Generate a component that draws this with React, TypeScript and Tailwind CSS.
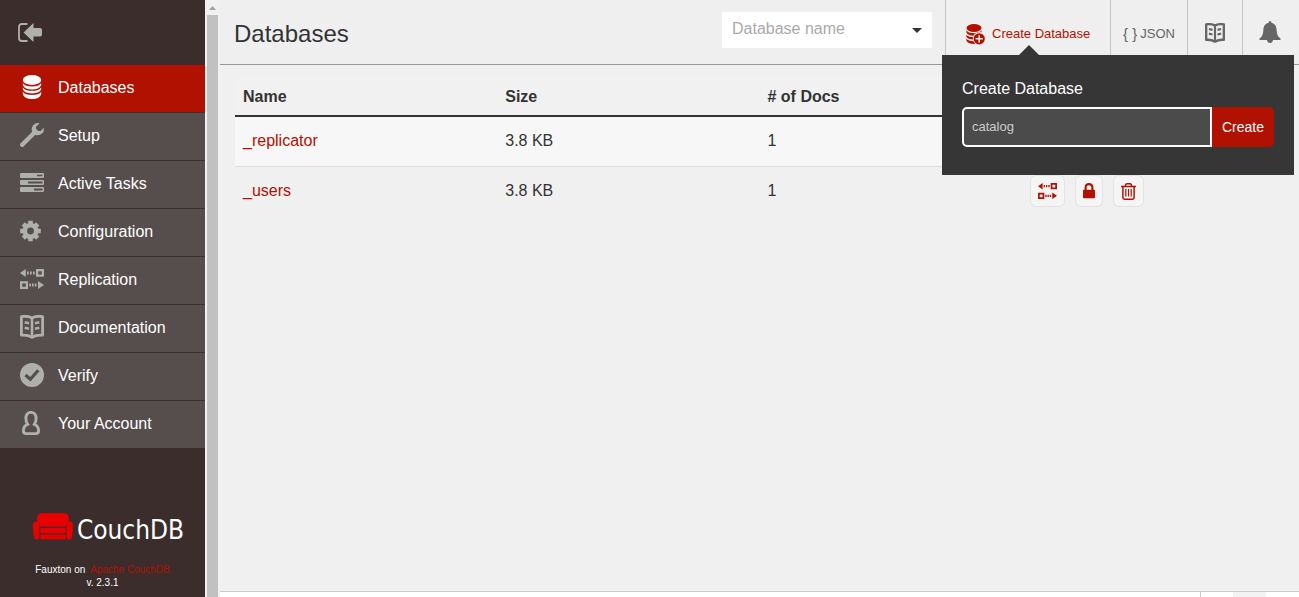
import React from 'react';

type IconProps = { className?: string };

function CollapseIcon({ className }: IconProps) {
  return (
    <svg className={className} viewBox="0 0 24 20" width="24" height="20" aria-hidden="true">
      <path d="M9.5 1H4Q1 1 1 4V15Q1 18 4 18H9.5" fill="none" stroke="currentColor" strokeWidth="1.8" />
      <path d="M5.5 9.5 15.5 0V5H22Q24 5 24 6.8V11.7Q24 13.5 22 13.5H15.5V19Z" fill="currentColor" />
    </svg>
  );
}

function DatabaseIcon({ className }: IconProps) {
  return (
    <svg className={className} viewBox="0 0 24 24" width="24" height="24" fill="currentColor" aria-hidden="true">
      <ellipse cx="12" cy="5" rx="9.2" ry="5" />
      <path d="M2.8 8Q5 11.6 12 11.6T21.2 8V9.7Q20 14.4 12 14.4T2.8 9.7Z" />
      <path d="M2.8 12.4Q5 15.8 12 15.8T21.2 12.4V14Q20 18.4 12 18.4T2.8 14Z" />
      <path d="M2.8 16.8Q5 20 12 20T21.2 16.8V19Q20 24 12 24T2.8 19Z" />
    </svg>
  );
}

function DatabaseAddIcon({ className }: IconProps) {
  return (
    <svg className={className} viewBox="0 0 19 21" width="19" height="21" fill="currentColor" aria-hidden="true">
      <ellipse cx="8" cy="4" rx="7.5" ry="4" />
      <path d="M0.4 6.3Q2 9.2 8 9.2T15.5 6.3V8.2H11L8 11.8Q1.5 11.4 0.4 8.3Z" />
      <path d="M0.4 10.4Q2 13 7.6 13.2V15.6Q1.5 15.2 0.4 12.4Z" />
      <path d="M0.4 14.4Q2 17 8 17.2L10 20Q1.5 20.4 0.4 16.6Z" />
      <circle cx="13.2" cy="14.8" r="6.3" fill="#f0f0f0" />
      <circle cx="13.2" cy="14.8" r="5.6" />
      <path d="M13.2 11.2V18.4M9.6 14.8H16.8" stroke="#f0f0f0" strokeWidth="1.5" />
    </svg>
  );
}

function WrenchIcon({ className }: IconProps) {
  return (
    <svg className={className} viewBox="0 0 24 24" width="24" height="24" aria-hidden="true">
      <path d="M2.2 21.8 15.3 8.7" stroke="currentColor" strokeWidth="4.4" strokeLinecap="round" />
      <path
        d="M19.6 0.4Q16 -0.6 13.4 2Q11 4.6 12 8.4L15.6 12Q19.4 13 22 10.6Q24.5 8 23.8 4.8L20.5 7.9Q18.5 8.6 17 7.1T16.2 3.6Z"
        fill="currentColor"
      />
    </svg>
  );
}

function TasksIcon({ className }: IconProps) {
  return (
    <svg className={className} viewBox="0 0 24 24" width="24" height="24" fill="currentColor" aria-hidden="true">
      <path
        fillRule="evenodd"
        d="M1 2H23Q24 2 24 3V6Q24 7 23 7H1Q0 7 0 6V3Q0 2 1 2ZM17 3.7V5.3H22.5V3.7ZM1 9H23Q24 9 24 10V13Q24 14 23 14H1Q0 14 0 13V10Q0 9 1 9ZM8 10.5V12.5H22.5V10.5ZM1 16H23Q24 16 24 17V20Q24 21 23 21H1Q0 21 0 20V17Q0 16 1 16ZM14 17.5V19.5H22.5V17.5Z"
      />
    </svg>
  );
}

function GearIcon({ className }: IconProps) {
  return (
    <svg className={className} viewBox="0 0 24 24" width="24" height="24" aria-hidden="true">
      <g fill="none" stroke="currentColor" strokeWidth="4.6">
        <path d="M10.5 1.7V7M10.5 17V22.3M0.2 12H5.5M15.5 12H20.8M3.3 4.8 7 8.5M14 15.5 17.7 19.2M3.3 19.2 7 15.5M14 8.5 17.7 4.8" />
        <circle cx="10.5" cy="12" r="5.7" strokeWidth="4.6" />
      </g>
    </svg>
  );
}

function ReplicateIcon({ className }: IconProps) {
  return (
    <svg className={className} viewBox="0 0 24 20" width="24" height="20" fill="currentColor" aria-hidden="true">
      <path d="M0 4 5.8 0V8ZM7 2.4H8.7V5.4H7ZM10 2.4H11.7V5.4H10ZM13 2.4H14.7V5.4H13Z" />
      <path fillRule="evenodd" d="M16 0H24V7.8H16ZM18.2 2.2V5.6H21.8V2.2ZM0 12.2H8V20H0ZM2.2 14.4V17.8H5.8V14.4Z" />
      <path d="M9.2 14.6H10.9V17.6H9.2ZM12 14.6H13.7V17.6H12ZM14.8 14.6H16.5V17.6H14.8ZM18 12 24 16.1 18 20Z" />
    </svg>
  );
}

function BookIcon({ className }: IconProps) {
  return (
    <svg className={className} viewBox="0 0 24 24" fill="none" stroke="currentColor" aria-hidden="true">
      <path d="M1.4 1.6Q8 0.7 12 3Q16 0.7 22.6 1.6V20.2Q16 19.8 12 22.4Q8 19.8 1.4 20.2Z" strokeWidth="2.8" strokeLinejoin="round" />
      <path d="M12 2.5V22" strokeWidth="2.6" />
      <path d="M4.7 7.2 9 8.2M4.7 12.8 9 13.8M15 8.2 19.3 7.2M15 13.8 19.3 12.8" strokeWidth="2.6" />
    </svg>
  );
}

function CheckIcon({ className }: IconProps) {
  return (
    <svg className={className} viewBox="0 0 24 24" width="24" height="24" aria-hidden="true">
      <circle cx="12" cy="12" r="12" fill="currentColor" />
      <path d="M5.5 12 10.3 16.3 18.3 7.3" fill="none" stroke="#564e4c" strokeWidth="3.2" />
    </svg>
  );
}

function UserIcon({ className }: IconProps) {
  return (
    <svg className={className} viewBox="0 0 24 24" width="24" height="24" aria-hidden="true">
      <path
        d="M11 1.4C7.4 1.4 5.9 3.8 5.9 7.4C5.9 9.8 6.4 11.8 7.6 13.4C4.6 14.6 3.4 16.8 3.4 19.8Q3.4 22.6 6.2 22.6H15.8Q18.6 22.6 18.6 19.8C18.6 16.8 17.4 14.6 14.4 13.4C15.6 11.8 16.1 9.8 16.1 7.4C16.1 3.8 14.6 1.4 11 1.4Z"
        fill="none"
        stroke="currentColor"
        strokeWidth="2.9"
      />
    </svg>
  );
}

function BellIcon({ className }: IconProps) {
  return (
    <svg className={className} viewBox="0 0 22 22" width="22" height="22" fill="currentColor" aria-hidden="true">
      <path d="M11 0Q12.4 0 12.5 1.7C16 2.6 17.4 5.3 17.6 8.5C17.8 13 18.6 15.8 21.5 17.6V19H14Q13.6 22 11 22T8 19H0.5V17.6C3.4 15.8 4.2 13 4.4 8.5C4.6 5.3 6 2.6 9.5 1.7Q9.6 0 11 0Z" />
    </svg>
  );
}

function LockIcon({ className }: IconProps) {
  return (
    <svg className={className} viewBox="0 0 12 16" width="12" height="16" aria-hidden="true">
      <path d="M2.6 8V4.8Q2.6 1.1 6 1.1T9.4 4.8V8" fill="none" stroke="currentColor" strokeWidth="2.1" />
      <rect y="6.8" width="12" height="8.4" rx="0.8" fill="currentColor" />
    </svg>
  );
}

function TrashIcon({ className }: IconProps) {
  return (
    <svg className={className} viewBox="0 0 15 17" width="15" height="17" fill="none" stroke="currentColor" aria-hidden="true">
      <path d="M0 3.5H15" strokeWidth="1.5" />
      <path d="M4.3 3.2Q4.5 0.8 6 0.8H9Q10.5 0.8 10.7 3.2" strokeWidth="1.4" />
      <path d="M1.9 3.5V14.6Q1.9 16.2 3.5 16.2H11.5Q13.1 16.2 13.1 14.6V3.5" strokeWidth="1.5" />
      <path d="M4.8 6V13.6M7.5 6V13.6M10.2 6V13.6" strokeWidth="1.2" />
    </svg>
  );
}

function CouchLogo() {
  return (
    <svg viewBox="0 0 40 27" width="40" height="27" fill="#e90000" aria-hidden="true">
      <path d="M4 7.4C3.8 2 5.6 0.2 10 0.2H30C34.4 0.2 36.2 2 36 7.4Q33.2 8.6 33 13.6H7Q6.8 8.6 4 7.4Z" />
      <path d="M3.6 8.2Q6.4 8.4 6.4 12V24.6Q6.2 26.6 4.4 26.6H3Q1.6 26.4 1.3 24.8Q0 20 0 12Q0.2 8.4 3.6 8.2Z" />
      <path d="M36.4 8.2Q33.6 8.4 33.6 12V24.6Q33.8 26.6 35.6 26.6H37Q38.4 26.4 38.7 24.8Q40 20 40 12Q39.8 8.4 36.4 8.2Z" />
      <path d="M7.4 14.8H32.6V20.2H7.4ZM7.4 21.4H32.6V26.2H8.4Q7.4 26.2 7.4 25Z" />
    </svg>
  );
}

const navItems = [
  { label: 'Databases', icon: <DatabaseIcon />, active: true },
  { label: 'Setup', icon: <WrenchIcon /> },
  { label: 'Active Tasks', icon: <TasksIcon /> },
  { label: 'Configuration', icon: <GearIcon /> },
  { label: 'Replication', icon: <ReplicateIcon /> },
  { label: 'Documentation', icon: <BookIcon className="size-6" /> },
  { label: 'Verify', icon: <CheckIcon /> },
  { label: 'Your Account', icon: <UserIcon /> },
];

function Sidebar() {
  return (
    <aside className="flex w-[205px] shrink-0 flex-col bg-[#3b2d2c]">
      <button type="button" aria-label="Collapse menu" className="flex h-[65px] w-full shrink-0 items-center pl-[18px] text-[#afb0ae]">
        <CollapseIcon />
      </button>
      <nav>
        <ul>
          {navItems.map((item) => (
            <li key={item.label} className="border-b border-[#3b2d2c]">
              <a
                href="#"
                className={
                  item.active
                    ? 'flex h-[47px] items-start gap-[14px] bg-[#b01100] pt-[10px] pl-5 text-base text-white'
                    : 'flex h-[47px] items-start gap-[14px] bg-[#564e4c] pt-[10px] pl-5 text-base text-white'
                }
              >
                <span className={item.active ? 'flex size-6 items-center' : 'flex size-6 items-center text-[#afb0ae]'}>{item.icon}</span>
                <span className="leading-[26px]">{item.label}</span>
              </a>
            </li>
          ))}
        </ul>
      </nav>
      <footer className="mt-auto pb-2 text-center text-[10px] leading-[13px] text-white">
        <div className="mb-4 flex items-start justify-center gap-1 pl-3">
          <CouchLogo />
          <span className="font-['DejaVu_Sans_Condensed','DejaVu_Sans',sans-serif] text-[26px] leading-[34px]">CouchDB</span>
        </div>
        <p>
          Fauxton on&nbsp;{' '}
          <a href="#" className="text-[#b01100]">
            Apache CouchDB
          </a>
        </p>
        <p>v. 2.3.1</p>
      </footer>
    </aside>
  );
}

function Scrollbar() {
  return (
    <div className="flex w-[15px] shrink-0 flex-col bg-[#f1f1f1] pr-[2px] pl-[2px]" aria-hidden="true">
      <svg viewBox="0 0 11 15" width="11" height="15" fill="#a3a3a3">
        <path d="M5.5 6 9 10H2Z" />
      </svg>
      <div className="w-[11px] flex-1 bg-[#c1c1c1]" />
    </div>
  );
}

function CreatePopover() {
  return (
    <form className="absolute top-[55px] right-[5px] z-10 w-[352px] bg-[#363636] px-5 pt-[22px] pb-7" onSubmit={(e) => e.preventDefault()}>
      <svg className="absolute -top-[10px] left-[77px]" viewBox="0 0 20 10" width="20" height="10" fill="#363636" aria-hidden="true">
        <path d="M10 0 20 10H0Z" />
      </svg>
      <label htmlFor="new-db" className="mb-[6px] block text-base text-white">
        Create Database
      </label>
      <div className="flex h-10">
        <input
          id="new-db"
          type="text"
          defaultValue="catalog"
          className="min-w-0 flex-1 rounded-l-[5px] border-2 border-white bg-[#4b4b4b] px-2 text-[13px] text-[#ccc] outline-none"
        />
        <button type="submit" className="rounded-r-[5px] bg-[#b01100] px-[10px] text-sm text-white">
          Create
        </button>
      </div>
    </form>
  );
}

function Header() {
  return (
    <header className="relative flex h-[65px] shrink-0 border-b border-[#979797] bg-[#efefef]">
      <h1 className="flex-1 pt-[18px] pl-[14px] text-2xl leading-8 text-[#333]">Databases</h1>
      <div className="relative mt-3 mr-[13px] h-9 w-[210px]">
        <input
          type="text"
          aria-label="Database name"
          placeholder="Database name"
          className="h-full w-full bg-white pr-8 pb-[3px] pl-[10px] text-base placeholder:text-[#aaa] outline-none"
        />
        <svg className="absolute top-4 right-[10px]" viewBox="0 0 10 5" width="10" height="5" fill="#333" aria-hidden="true">
          <path d="M0 0H10L5 5Z" />
        </svg>
      </div>
      <button type="button" className="flex w-[165px] items-center gap-[7px] border-l border-[#c6c6c6] pt-1 pl-5 text-[13px] text-[#b01100]">
        <DatabaseAddIcon />
        Create Database
      </button>
      <button type="button" className="flex w-[77px] items-center justify-center gap-[3px] border-l border-[#c6c6c6] pt-[3px] text-[13px] text-[#666]">
        <span className="text-[15px] leading-5">{'{ }'}</span>
        <span className="leading-5">JSON</span>
      </button>
      <a href="#" aria-label="Documentation" className="flex w-[55px] items-center justify-center border-l border-[#c6c6c6] pt-[2px] text-[#666]">
        <BookIcon className="size-5" />
      </a>
      <button type="button" aria-label="Notifications" className="flex w-[57px] items-center justify-center border-l border-[#c6c6c6] pr-[2px] text-[#666]">
        <BellIcon />
      </button>
      <CreatePopover />
    </header>
  );
}

const databases = [
  { name: '_replicator', size: '3.8 KB', docs: '1' },
  { name: '_users', size: '3.8 KB', docs: '1' },
];

function ActionButton({ label, children }: { label: string; children: React.ReactNode }) {
  return (
    <button type="button" aria-label={label} className="flex h-8 items-center rounded-md border border-[#e3e3e3] bg-[#f5f5f5] px-[7px] text-[#b01100]">
      {children}
    </button>
  );
}

function DatabaseTable() {
  return (
    <table className="w-full table-fixed border-separate border-spacing-0 text-left text-base text-[#333]">
      <thead>
        <tr className="h-[42px] bg-[#f1f1f1]">
          <th className="border-b-2 border-[#333] px-2 pt-1 font-bold">Name</th>
          <th className="border-b-2 border-[#333] px-2 pt-1 font-bold">Size</th>
          <th className="border-b-2 border-[#333] px-2 pt-1 font-bold"># of Docs</th>
          <th className="border-b-2 border-[#333] px-2 pt-1" aria-label="Actions" />
        </tr>
      </thead>
      <tbody>
        {databases.map((db) => (
          <tr key={db.name} className="group h-[50px] align-top leading-8 odd:bg-[#f7f7f7]">
            <td className="border-b border-[#ddd] px-2 pt-2 group-last:border-b-0">
              <a href="#" className="text-[#b01100]">
                {db.name}
              </a>
            </td>
            <td className="border-b border-[#ddd] px-2 pt-2 group-last:border-b-0">{db.size}</td>
            <td className="border-b border-[#ddd] px-2 pt-2 group-last:border-b-0">{db.docs}</td>
            <td className="border-b border-[#ddd] px-2 pt-2 group-last:border-b-0">
              <div className="flex gap-[10px]">
                <ActionButton label={'Replicate ' + db.name}>
                  <ReplicateIcon className="h-4 w-[19px]" />
                </ActionButton>
                <ActionButton label={'Permissions for ' + db.name}>
                  <LockIcon />
                </ActionButton>
                <ActionButton label={'Delete ' + db.name}>
                  <TrashIcon />
                </ActionButton>
              </div>
            </td>
          </tr>
        ))}
      </tbody>
    </table>
  );
}

export default function App() {
  return (
    <div className="flex h-screen overflow-hidden bg-[#f0f0f0] font-['Liberation_Sans',Arial,sans-serif]">
      <Sidebar />
      <Scrollbar />
      <div className="flex min-w-0 flex-1 flex-col">
        <Header />
        <main className="min-h-0 flex-1 px-[15px] pt-[10px]">
          <DatabaseTable />
        </main>
        <footer className="flex h-[6px] shrink-0 justify-end border-t border-[#ccc] bg-white">
          <div className="w-[99px] border-l border-[#ccc] pl-8">
            <div className="h-full w-[33px] bg-[#f3f3f3]" />
          </div>
        </footer>
      </div>
    </div>
  );
}
